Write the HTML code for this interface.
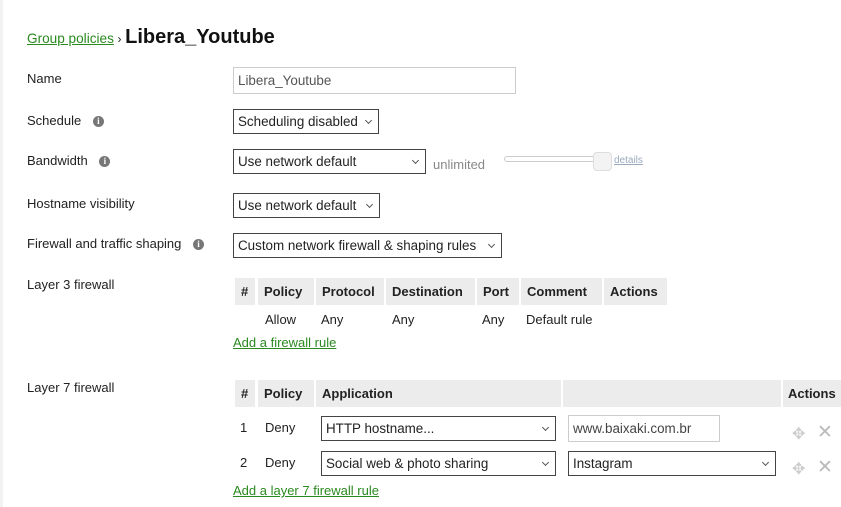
<!DOCTYPE html>
<html><head><meta charset="utf-8"><style>
*{box-sizing:border-box;margin:0;padding:0}
body{width:841px;height:507px;background:#fff;font-family:"Liberation Sans",sans-serif;font-size:13px;color:#222;position:relative;overflow:hidden}
.a{position:absolute;white-space:nowrap}
.lbl{position:absolute;left:27px;line-height:16px}
a{color:#2a8a1f;text-decoration:underline}
.sel{position:absolute;border:1px solid #444;background:#fff;height:25px;line-height:23px;padding-left:4px;font-size:13.4px;color:#222}
.sel:after{content:"";position:absolute;right:7px;top:8px;width:4px;height:4px;border-right:1px solid #555;border-bottom:1px solid #555;transform:rotate(45deg)}
.inp{position:absolute;border:1px solid #ccc;height:27px;line-height:25px;padding-left:4px;color:#555;font-size:13.4px}
.info{display:inline-block;width:11px;height:11px;border-radius:50%;background:#777;color:#fff;font-size:9px;font-weight:bold;text-align:center;line-height:11px;font-family:"Liberation Serif",serif;vertical-align:1px;margin-left:8px}
.th{position:absolute;background:#ececec;font-weight:bold;height:27px;line-height:27px;padding-left:6px}
.td{position:absolute;line-height:16px}
</style></head><body>
<div class="a" style="left:0;top:0;width:3px;height:507px;background:#f2f2f2"></div>
<div class="a" style="left:27px;top:25px;line-height:24px"><a style="font-size:13.6px">Group policies</a> <span style="font-size:12px">›</span> <b style="font-size:20px;color:#111">Libera_Youtube</b></div>

<div class="lbl" style="top:71px">Name</div>
<div class="inp" style="left:233px;top:67px;width:283px">Libera_Youtube</div>

<div class="lbl" style="top:113px">Schedule <span class="info">i</span></div>
<div class="sel" style="left:233px;top:109px;width:146px">Scheduling disabled</div>

<div class="lbl" style="top:153px">Bandwidth <span class="info">i</span></div>
<div class="sel" style="left:233px;top:149px;width:193px">Use network default</div>
<div class="a" style="left:433px;top:157px;color:#888">unlimited</div>
<div class="a" style="left:504px;top:156px;width:94px;height:6px;border:1px solid #ccc;border-radius:3px"></div>
<div class="a" style="left:593px;top:152px;width:19px;height:19px;border:1px solid #ddd;border-radius:4px;background:#f3f3f3"></div>
<div class="a" style="left:614px;top:155px;font-size:10px"><a style="color:#9ab">details</a></div>

<div class="lbl" style="top:196px">Hostname visibility</div>
<div class="sel" style="left:233px;top:193px;width:147px">Use network default</div>

<div class="lbl" style="top:236px">Firewall and traffic shaping <span class="info">i</span></div>
<div class="sel" style="left:233px;top:233px;width:269px;padding-right:20px">Custom network firewall &amp; shaping rules</div>

<div class="lbl" style="top:277px">Layer 3 firewall</div>
<div class="th" style="left:235px;top:278px;width:20px">#</div>
<div class="th" style="left:258px;top:278px;width:56px">Policy</div>
<div class="th" style="left:316px;top:278px;width:68px">Protocol</div>
<div class="th" style="left:386px;top:278px;width:89px">Destination</div>
<div class="th" style="left:477px;top:278px;width:42px">Port</div>
<div class="th" style="left:521px;top:278px;width:81px">Comment</div>
<div class="th" style="left:604px;top:278px;width:63px">Actions</div>
<div class="td" style="left:265px;top:312px">Allow</div>
<div class="td" style="left:321px;top:312px">Any</div>
<div class="td" style="left:392px;top:312px">Any</div>
<div class="td" style="left:482px;top:312px">Any</div>
<div class="td" style="left:526px;top:312px">Default rule</div>
<div class="a" style="left:233px;top:335px"><a>Add a firewall rule</a></div>

<div class="lbl" style="top:380px">Layer 7 firewall</div>
<div class="th" style="left:235px;top:380px;width:20px">#</div>
<div class="th" style="left:258px;top:380px;width:56px">Policy</div>
<div class="th" style="left:316px;top:380px;width:245px">Application</div>
<div class="th" style="left:563px;top:380px;width:218px"></div>
<div class="th" style="left:783px;top:380px;width:60px;padding-left:5px">Actions</div>
<div class="td" style="left:240px;top:420px">1</div>
<div class="td" style="left:265px;top:420px">Deny</div>
<div class="sel" style="left:321px;top:416px;width:235px;height:25px">HTTP hostname...</div>
<div class="inp" style="left:568px;top:415px;width:152px;color:#444">www.baixaki.com.br</div>
<div class="td" style="left:240px;top:455px">2</div>
<div class="td" style="left:265px;top:455px">Deny</div>
<div class="sel" style="left:321px;top:451px;width:235px">Social web &amp; photo sharing</div>
<div class="sel" style="left:568px;top:451px;width:208px">Instagram</div>
<div class="a" style="left:792px;top:424px;color:#ccc;font-size:16px">✥</div>
<div class="a" style="left:817px;top:421px;color:#bbb;font-size:19px">✕</div>
<div class="a" style="left:792px;top:459px;color:#ccc;font-size:16px">✥</div>
<div class="a" style="left:817px;top:456px;color:#bbb;font-size:19px">✕</div>
<div class="a" style="left:233px;top:483px"><a>Add a layer 7 firewall rule</a></div>
</body></html>
